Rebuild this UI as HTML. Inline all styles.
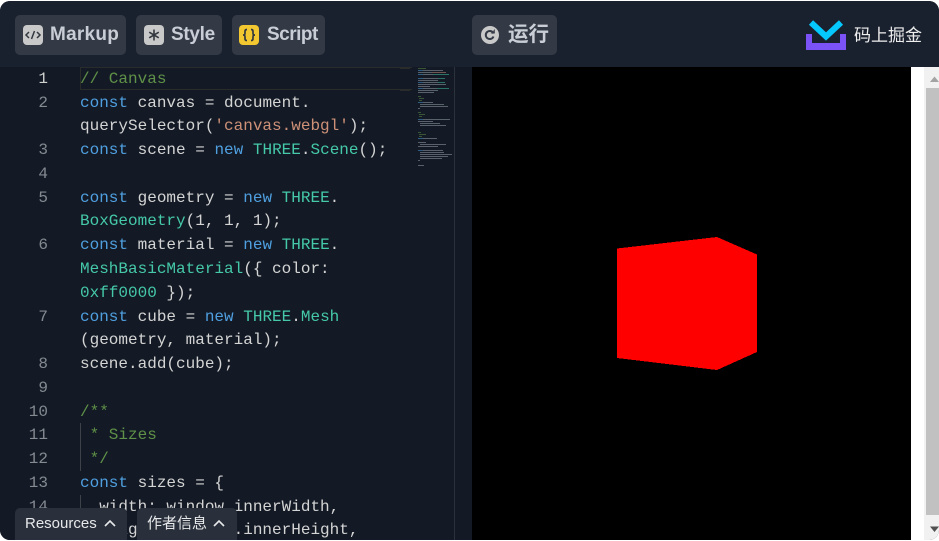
<!DOCTYPE html>
<html>
<head>
<meta charset="utf-8">
<style>
*{box-sizing:border-box}
html,body{margin:0;padding:0;width:939px;height:541px;overflow:hidden;background:#fff}
#app{position:absolute;left:0;top:1px;width:939px;height:539px;background:#131a25;border-radius:10px;overflow:hidden}
#hd{position:absolute;left:0;top:0;width:939px;height:66px;background:#1a212e}
.btn{position:absolute;top:14px;height:40px;background:#343a45;border-radius:5px;color:#c9ced6;font:bold 19px/40px "Liberation Sans","Noto Sans CJK SC",sans-serif;white-space:nowrap}
.btn span{position:absolute;top:0}
.ic{position:absolute;left:8px;top:10px;width:20px;height:20px;border-radius:4px;background:#c9c9c9}
#code{position:absolute;left:0;top:66px;width:455px;height:473px;overflow:hidden;background:#131a25;font:16px/23.75px "Liberation Mono",monospace;color:#d4d4d4}
#in{position:absolute;left:0;top:1px;width:455px;height:472px}
.l{position:absolute;left:80px;white-space:pre;height:24px}
.n{position:absolute;left:0;width:48px;text-align:right;color:#858a91;white-space:pre}
.k{color:#4f9fe0}.t{color:#45c9a8}.c{color:#5f9148}.s{color:#ce9178}
#mm{position:absolute;left:418px;top:66px;width:34px;height:104px;filter:blur(.35px)}
#pv{position:absolute;left:472px;top:66px;width:439px;height:473px;background:#000}
#sb{position:absolute;left:911px;top:66px;width:13px;height:473px;background:#fff}
#sc{position:absolute;left:924px;top:66px;width:15px;height:473px;background:#f1f1f1}
.pop{position:absolute;top:508px;height:32px;background:#2a303b;color:#e6e8ea;font:15px/31px "Liberation Sans","Noto Sans CJK SC",sans-serif;white-space:nowrap;border-radius:5px 5px 0 0}
</style>
</head>
<body>
<div id="app">
<div id="code">
<div style="position:absolute;left:80px;top:0;width:332px;height:23px;border:1px solid #2a2c2c;border-right:0"></div>
<div style="position:absolute;left:400px;top:0;width:10px;height:2px;background:#2a2c2c"></div>
<div style="position:absolute;left:400px;top:22px;width:10px;height:2px;background:#2a2c2c"></div>
<div style="position:absolute;left:454px;top:0;width:1px;height:473px;background:#2c323c"></div>
<div id="in">
<div style="position:absolute;left:80px;top:355px;width:1px;height:48px;background:#3d4148"></div>
<div style="position:absolute;left:80px;top:427px;width:1px;height:44px;background:#3d4148"></div>
<div class="n" style="top:0;color:#d0d0d0">1</div>
<div class="n" style="top:24px">2</div>
<div class="n" style="top:71px">3</div>
<div class="n" style="top:95px">4</div>
<div class="n" style="top:119px">5</div>
<div class="n" style="top:166px">6</div>
<div class="n" style="top:238px">7</div>
<div class="n" style="top:285px">8</div>
<div class="n" style="top:309px">9</div>
<div class="n" style="top:333px">10</div>
<div class="n" style="top:356px">11</div>
<div class="n" style="top:380px">12</div>
<div class="n" style="top:404px">13</div>
<div class="n" style="top:428px">14</div>
<div class="l" style="top:0"><span class="c">// Canvas</span></div>
<div class="l" style="top:24px"><span class="k">const</span> canvas = document.</div>
<div class="l" style="top:47px">querySelector(<span class="s">'canvas.webgl'</span>);</div>
<div class="l" style="top:71px"><span class="k">const</span> scene = <span class="k">new</span> <span class="t">THREE</span>.<span class="t">Scene</span>();</div>
<div class="l" style="top:119px"><span class="k">const</span> geometry = <span class="k">new</span> <span class="t">THREE</span>.</div>
<div class="l" style="top:142px"><span class="t">BoxGeometry</span>(1, 1, 1);</div>
<div class="l" style="top:166px"><span class="k">const</span> material = <span class="k">new</span> <span class="t">THREE</span>.</div>
<div class="l" style="top:190px"><span class="t">MeshBasicMaterial</span>({ color:</div>
<div class="l" style="top:214px"><span class="t">0xff0000</span> });</div>
<div class="l" style="top:238px"><span class="k">const</span> cube = <span class="k">new</span> <span class="t">THREE</span>.<span class="t">Mesh</span></div>
<div class="l" style="top:261px">(geometry, material);</div>
<div class="l" style="top:285px">scene.add(cube);</div>
<div class="l" style="top:333px"><span class="c">/**</span></div>
<div class="l" style="top:356px"><span class="c"> * Sizes</span></div>
<div class="l" style="top:380px"><span class="c"> */</span></div>
<div class="l" style="top:404px"><span class="k">const</span> sizes = {</div>
<div class="l" style="top:428px">  width: window.innerWidth,</div>
<div class="l" style="top:451px">  height: window.innerHeight,</div>
</div>
</div>
<svg id="mm" width="34" height="104" viewBox="0 0 34 104" opacity=".5">
<g fill="#5f9148"><rect x="0" y="1" width="8" height="1"/><rect x="0" y="29" width="3" height="1"/><rect x="1" y="31" width="5" height="1"/><rect x="1" y="33" width="3" height="1"/><rect x="0" y="45" width="3" height="1"/><rect x="1" y="47" width="6" height="1"/><rect x="1" y="49" width="3" height="1"/><rect x="0" y="65" width="3" height="1"/><rect x="1" y="67" width="7" height="1"/><rect x="1" y="69" width="3" height="1"/></g>
<g fill="#a0a8b2"><rect x="5" y="3" width="20" height="1"/><rect x="0" y="5" width="14" height="1"/><rect x="5" y="7" width="10" height="1"/><rect x="5" y="11" width="15" height="1"/><rect x="0" y="13" width="20" height="1"/><rect x="5" y="15" width="15" height="1"/><rect x="0" y="17" width="28" height="1"/><rect x="0" y="19" width="12" height="1"/><rect x="5" y="21" width="14" height="1"/><rect x="0" y="23" width="20" height="1"/><rect x="0" y="25" width="16" height="1"/><rect x="5" y="35" width="10" height="1"/><rect x="2" y="37" width="24" height="1"/><rect x="2" y="39" width="28" height="1"/><rect x="0" y="41" width="2" height="1"/><rect x="5" y="52" width="27" height="1"/><rect x="0" y="54" width="15" height="1"/><rect x="2" y="56" width="20" height="1"/><rect x="2" y="58" width="26" height="1"/><rect x="5" y="71" width="14" height="1"/><rect x="0" y="75" width="8" height="1"/><rect x="2" y="77" width="26" height="1"/><rect x="0" y="79" width="20" height="1"/><rect x="5" y="83" width="20" height="1"/><rect x="2" y="85" width="24" height="1"/><rect x="2" y="87" width="32" height="1"/><rect x="2" y="89" width="28" height="1"/><rect x="2" y="91" width="22" height="1"/><rect x="0" y="93" width="2" height="1"/><rect x="0" y="98" width="6" height="1"/></g>
<g fill="#4f9fe0"><rect x="0" y="3" width="5" height="1"/><rect x="0" y="7" width="5" height="1"/><rect x="0" y="11" width="5" height="1"/><rect x="0" y="15" width="5" height="1"/><rect x="0" y="21" width="5" height="1"/><rect x="0" y="35" width="5" height="1"/><rect x="0" y="52" width="5" height="1"/><rect x="0" y="71" width="5" height="1"/><rect x="0" y="83" width="5" height="1"/></g>
<g fill="#45c9a8"><rect x="15" y="7" width="16" height="1"/><rect x="20" y="11" width="7" height="1"/><rect x="0" y="13" width="0" height="1"/><rect x="20" y="15" width="7" height="1"/><rect x="19" y="21" width="12" height="1"/><rect x="15" y="35" width="0" height="1"/></g>
<rect x="14" y="5" width="14" height="1" fill="#ce9178"/>
</svg>
<div id="pv">
<svg width="439" height="473" viewBox="472 67 439 473" style="display:block" shape-rendering="crispEdges"><polygon points="617,248.500 717,237 757,254.500 757,352 717,370 617,358" fill="#f00"/></svg>
</div>
<div id="sb"></div>
<div id="sc">
<svg width="15" height="473" style="display:block"><rect x="2" y="21" width="13" height="427" fill="#c1c1c1"/><path d="M6 15h9L10.500 9.500z" fill="#a3a3a3"/><path d="M6 459.500h9l-4.500 5.500z" fill="#505050"/></svg>
</div>
<div id="hd">
<div class="btn" style="left:15px;width:111px"><i class="ic"><svg width="20" height="20" viewBox="0 0 20 20" style="display:block" fill="none" stroke="#33383f" stroke-width="1.500"><path d="M6 7l-3 3 3 3M14 7l3 3-3 3M11.500 6l-3 8"/></svg></i><span style="left:35px;letter-spacing:.25px">Markup</span></div>
<div class="btn" style="left:136px;width:86px"><i class="ic"><svg width="20" height="20" viewBox="0 0 20 20" style="display:block" fill="none" stroke="#33383f" stroke-width="1.600"><path d="M10 4.500v11M5.200 7.200l9.600 5.600M14.800 7.200l-9.600 5.600"/></svg></i><span style="left:35px;letter-spacing:-.3px">Style</span></div>
<div class="btn" style="left:232px;width:93px"><i class="ic" style="left:7px;background:#f2c72f"><svg width="20" height="20" viewBox="0 0 20 20" style="display:block" fill="none" stroke="#33383f" stroke-width="1.700"><path d="M8 4.500c-2.200 0-2 1.200-2 3S6 10 4 10c2 0 2 .7 2 2.500s-.2 3 2 3M12 4.500c2.200 0 2 1.200 2 3s0 2.500 2 2.500c-2 0-2 .7-2 2.500s.2 3-2 3"/></svg></i><span style="left:35px;letter-spacing:-.5px">Script</span></div>
<div class="btn" style="left:472px;width:85px;font-size:20.500px"><svg style="position:absolute;left:9px;top:11px" width="18" height="18" viewBox="0 0 18 18"><circle cx="9" cy="9" r="9" fill="#c9c9c9"/><path d="M12.500 7.500A4 4 0 1 0 12.500 10.500" fill="none" stroke="#343a45" stroke-width="2"/><path d="M9.500 7.500h4.500V3z" fill="#343a45" opacity=".8"/></svg><span style="left:36px">运行</span></div>
<svg style="position:absolute;left:806px;top:18px" width="40" height="31" viewBox="0 0 40 31"><path d="M0 15h6v9h28V15h6v16H0z" fill="#7b52f5"/><path d="M5 3.500l15 14 15-14" fill="none" stroke="#05c8fd" stroke-width="6"/></svg>
<div style="position:absolute;left:854px;top:21px;color:#eee;font:17px/24px 'Noto Sans CJK SC',sans-serif;white-space:nowrap">码上掘金</div>
</div>
</div>
<div class="pop" style="left:15px;width:112px"><span style="position:absolute;left:10px;top:0">Resources</span><svg style="position:absolute;left:89px;top:11px" width="12" height="9" viewBox="0 0 12 9"><path d="M1 7l5-5 5 5" fill="none" stroke="#e6e8ea" stroke-width="1.600"/></svg></div>
<div class="pop" style="left:137px;width:100px"><span style="position:absolute;left:10px;top:0">作者信息</span><svg style="position:absolute;left:76px;top:11px" width="12" height="9" viewBox="0 0 12 9"><path d="M1 7l5-5 5 5" fill="none" stroke="#e6e8ea" stroke-width="1.600"/></svg></div>
</body>
</html>
